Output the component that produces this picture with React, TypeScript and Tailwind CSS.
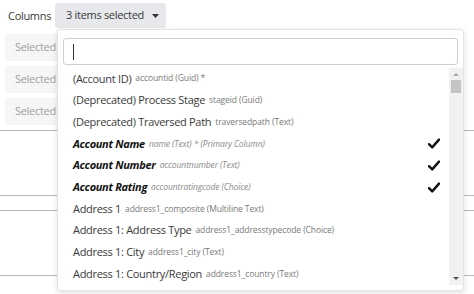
import React from "react";

type Item = { label: string; sub: string; selected?: boolean };

const items: Item[] = [
  { label: "(Account ID)", sub: "accountid (Guid) *" },
  { label: "(Deprecated) Process Stage", sub: "stageid (Guid)" },
  { label: "(Deprecated) Traversed Path", sub: "traversedpath (Text)" },
  { label: "Account Name", sub: "name (Text) * (Primary Column)", selected: true },
  { label: "Account Number", sub: "accountnumber (Text)", selected: true },
  { label: "Account Rating", sub: "accountratingcode (Choice)", selected: true },
  { label: "Address 1", sub: "address1_composite (Multiline Text)" },
  { label: "Address 1: Address Type", sub: "address1_addresstypecode (Choice)" },
  { label: "Address 1: City", sub: "address1_city (Text)" },
  { label: "Address 1: Country/Region", sub: "address1_country (Text)" },
];

function Check() {
  return (
    <svg width="12" height="11" viewBox="0 0 12 11">
      <path d="M1 6.2 L4.2 9.4 L11 1.6" fill="none" stroke="#111" strokeWidth="2.4" strokeLinecap="round" strokeLinejoin="round" />
    </svg>
  );
}

export default function App() {
  return (
    <div className="relative w-[474px] h-[294px] overflow-hidden bg-white text-[11px] tracking-[-0.3px] text-[#3a3a3a] font-['Open_Sans',sans-serif]">
      <div className="flex items-center pt-[3px] h-[28px]">
        <span className="ml-[8px] w-[47px] leading-[25px] whitespace-nowrap">Columns</span>
        <div className="h-[25px] w-[111px] pl-[11px] bg-[#e6e8eb] rounded-[3px] flex items-center whitespace-nowrap">
          <span>3 items selected</span>
          <svg className="ml-[8px]" width="7" height="4" viewBox="0 0 7 4">
            <path d="M0 0 H7 L3.5 4 Z" fill="#333" />
          </svg>
        </div>
      </div>
      <div className="flex flex-col gap-[5px] mt-[6px] pl-[5px]">
        {[0, 1, 2].map((i) => (
          <div key={i} className="h-[27px] w-[120px] bg-[#f6f6f6] rounded-[3px] pl-[10px] flex items-center text-[#a0a0a0]">
            Selected
          </div>
        ))}
      </div>
      <div className="mt-[5px] h-px bg-[#b9b9b9]" />
      <div className="mt-[64px] h-px bg-[#b9b9b9]" />
      <div className="mt-[14px] h-px bg-[#b9b9b9]" />
      <div className="mt-[64px] h-px bg-[#b9b9b9]" />

      <div className="absolute left-[57px] top-[29px] w-[407px] h-[262px] bg-white border border-[#e3e3e3] rounded-[3px] shadow-[0_2px_6px_rgba(0,0,0,0.12)] flex flex-col">
        <div className="px-[5px] pt-[8px]">
          <div className="relative h-[27px] border border-[#cfcfcf] rounded-[3px] bg-white">
            <span className="absolute left-[9px] top-[5px] w-px h-[16px] bg-[#333]" />
          </div>
        </div>
        <div className="flex mt-[3px] h-[217px]">
          <div className="flex-1 flex flex-col">
            {items.map((it) => (
              <div key={it.label} className="h-[21.7px] flex items-center pl-[15px] pr-[9px] whitespace-nowrap">
                {it.selected ? (
                  <>
                    <span className="font-bold italic text-[#111]">{it.label}</span>
                    <span className="ml-[4px] text-[8.5px] tracking-[-0.1px] italic text-[#8a8a8a]">{it.sub}</span>
                    <span className="ml-auto flex items-center"><Check /></span>
                  </>
                ) : (
                  <>
                    <span>{it.label}</span>
                    <span className="ml-[4px] text-[8.5px] tracking-[-0.1px] text-[#7a7a7a]">{it.sub}</span>
                  </>
                )}
              </div>
            ))}
          </div>
          <div className="w-[14px] bg-[#f1f1f1] flex flex-col items-center">
            <svg className="mt-[5px]" width="6" height="3" viewBox="0 0 6 3">
              <path d="M0 3 L3 0 L6 3 Z" fill="#a8a8a8" />
            </svg>
            <div className="mt-[4px] w-[10px] h-[13px] bg-[#c4c4c4]" />
            <div className="flex-1" />
            <svg className="mb-[5px]" width="6" height="3" viewBox="0 0 6 3">
              <path d="M0 0 H6 L3 3 Z" fill="#505050" />
            </svg>
          </div>
        </div>
      </div>
    </div>
  );
}
